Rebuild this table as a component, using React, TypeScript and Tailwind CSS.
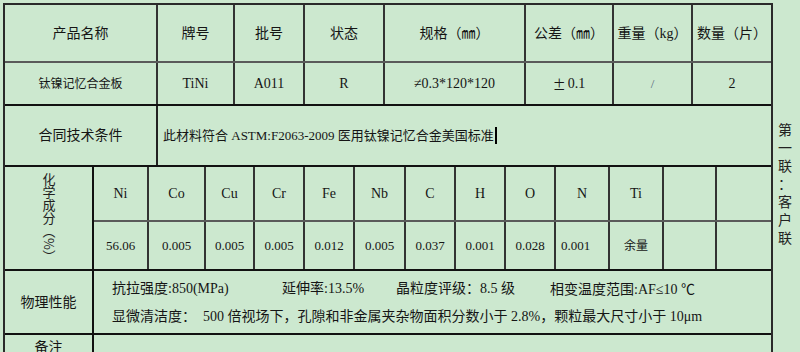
import React from "react";

const headerCols = [
  { w: "w-[151px]", t: "产品名称", first: true },
  { w: "w-[77px]", t: "牌号" },
  { w: "w-[70px]", t: "批号" },
  { w: "w-[80px]", t: "状态" },
  { w: "w-[141px]", t: "规格（㎜）" },
  { w: "w-[88px]", t: "公差（㎜）" },
  { w: "w-[79px]", t: "重量（kg）" },
  { w: "w-[80px]", t: "数量（片）" },
];

const dataCols: { w: string; t: React.ReactNode; cls: string }[] = [
  { w: "w-[151px]", t: "钛镍记忆合金板", cls: "text-[12px]" },
  { w: "w-[77px]", t: "TiNi", cls: "text-[14px]" },
  { w: "w-[70px]", t: "A011", cls: "text-[14px]" },
  { w: "w-[80px]", t: "R", cls: "text-[14px]" },
  { w: "w-[141px]", t: "≠0.3*120*120", cls: "text-[14px]" },
  {
    w: "w-[88px]",
    t: (
      <>
        <span className="font-['Noto_Sans_CJK_SC',sans-serif] text-[13px] mr-[2px]">±</span>0.1
      </>
    ),
    cls: "text-[14px]",
  },
  { w: "w-[79px]", t: "/", cls: "text-[13px] text-[#5a6b80]" },
  { w: "w-[80px]", t: "2", cls: "text-[14px]" },
];

const chemW = [
  "w-[53px]",
  "w-[57px]",
  "w-[49px]",
  "w-[50px]",
  "w-[50px]",
  "w-[51px]",
  "w-[50px]",
  "w-[50px]",
  "w-[50px]",
  "w-[54px]",
  "w-[54px]",
  "w-[53px]",
  "w-[56px]",
];
const chemNames = ["Ni", "Co", "Cu", "Cr", "Fe", "Nb", "C", "H", "O", "N", "Ti", "", ""];
const chemVals = ["56.06", "0.005", "0.005", "0.005", "0.012", "0.005", "0.037", "0.001", "0.028", "0.001", "余量", "", ""];

const side = ["第", "一", "联", "：", "客", "户", "联"];

export default function App() {
  return (
    <div className="w-[800px] h-[352px] overflow-hidden bg-[#cce8cf] text-[#151515] font-['Liberation_Serif','Noto_Sans_CJK_SC',serif] flex pt-[3px] pl-[3px]">
      <div className="w-[770px] h-[420px] shrink-0 border-2 border-[#2a2a2a] flex flex-col">
        {/* header row */}
        <div className="flex h-[56px] shrink-0">
          {headerCols.map((c, i) => (
            <div
              key={i}
              className={`${c.w} shrink-0 flex items-center justify-center text-[14px] ${
                i === 0 ? "" : "border-l-2 border-[#333]"
              }`}
            >
              {c.t}
            </div>
          ))}
        </div>
        {/* data row */}
        <div className="flex h-[43px] shrink-0 border-t-2 border-[#5a5a5a]">
          {dataCols.map((c, i) => (
            <div
              key={i}
              className={`${c.w} shrink-0 flex items-center justify-center ${c.cls} ${
                i === 0 ? "" : "border-l-2 border-[#333]"
              }`}
            >
              {c.t}
            </div>
          ))}
        </div>
        {/* contract row */}
        <div className="flex h-[61px] shrink-0 border-t-2 border-[#111]">
          <div className="w-[151px] shrink-0 flex items-center justify-center text-[14px]">合同技术条件</div>
          <div className="flex-1 border-l-2 border-[#222] flex items-center pl-[5px] text-[13px]">
            <span>此材料符合 ASTM:F2063-2009 医用钛镍记忆合金美国标准</span>
            <span className="inline-block w-[2px] h-[17px] bg-[#000] ml-[1px]" />
          </div>
        </div>
        {/* chemistry */}
        <div className="flex h-[104px] shrink-0 border-t-2 border-[#111]">
          <div className="w-[87px] shrink-0 flex items-center justify-center">
            <div className="[writing-mode:vertical-rl] text-[13px] leading-[14px] font-['Noto_Sans_CJK_SC',sans-serif] text-[#222]">
              化学成分（%）
            </div>
          </div>
          <div className="flex-1 border-l-2 border-[#111] flex flex-col">
            <div className="flex h-[53px] shrink-0">
              {chemNames.map((n, i) => (
                <div
                  key={i}
                  className={`${chemW[i]} shrink-0 flex items-center justify-center text-[14px] ${
                    i === 0 ? "" : "border-l-2 border-[#333]"
                  }`}
                >
                  {n}
                </div>
              ))}
            </div>
            <div className="flex flex-1 border-t-2 border-[#5a5a5a]">
              {chemVals.map((v, i) => (
                <div
                  key={i}
                  className={`${chemW[i]} shrink-0 flex items-center ${
                    i === 9 ? "justify-start pl-[5px]" : "justify-center"
                  } ${v === "余量" ? "text-[12px]" : "text-[13px]"} ${
                    i === 0 ? "" : "border-l-2 border-[#333]"
                  }`}
                >
                  {v}
                </div>
              ))}
            </div>
          </div>
        </div>
        {/* physical */}
        <div className="flex h-[64px] shrink-0 border-t-2 border-[#111]">
          <div className="w-[87px] shrink-0 flex items-center justify-center text-[14px]">物理性能</div>
          <div className="flex-1 border-l-2 border-[#111] flex flex-col justify-center pl-[18px] text-[14px] leading-[27px]">
            <div className="flex whitespace-nowrap">
              <span className="w-[170px] shrink-0">抗拉强度:850(MPa)</span>
              <span className="w-[114px] shrink-0">延伸率:13.5%</span>
              <span className="w-[154px] shrink-0">晶粒度评级：8.5 级</span>
              <span>
                相变温度范围:AF≤10 <span className="font-['Noto_Sans_CJK_SC',sans-serif]">℃</span>
              </span>
            </div>
            <div className="whitespace-nowrap">
              显微清洁度：<span className="ml-[7px]">500 倍视场下，孔隙和非金属夹杂物面积分数小于 2.8%，颗粒最大尺寸小于 10μm</span>
            </div>
          </div>
        </div>
        {/* remark */}
        <div className="flex flex-1 border-t-2 border-[#111]">
          <div className="w-[87px] shrink-0 flex justify-center pt-[3px] text-[14px] leading-[20px]">备注</div>
          <div className="flex-1 border-l-2 border-[#111]" />
        </div>
      </div>
      <div className="flex-1 flex flex-col items-center pt-[117px] pr-[3px] text-[14px] leading-[18px] font-['Noto_Sans_CJK_SC',sans-serif] text-[#222]">
        {side.map((c, i) => (
          <span key={i} className="block h-[18px]">
            {c}
          </span>
        ))}
      </div>
    </div>
  );
}
